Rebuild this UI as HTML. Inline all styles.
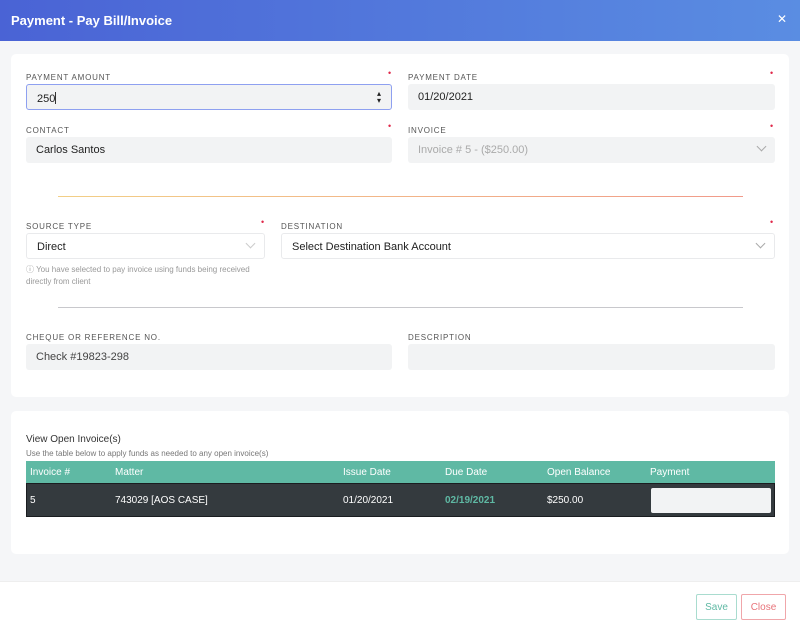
<!DOCTYPE html>
<html><head><style>
*{box-sizing:border-box;margin:0;padding:0}
body{width:800px;height:630px;background:#f5f6f8;font-family:"Liberation Sans",sans-serif;position:relative;overflow:hidden;color:#333}
.hd{position:absolute;left:0;top:0;width:800px;height:41px;background:linear-gradient(90deg,#4a63d5,#5a8de2);color:#fff;font-weight:bold;font-size:13px;padding:13px 11px}
.x{position:absolute;right:13px;top:12px;color:#fff;font-size:12px;font-weight:normal}
.card{position:absolute;left:11px;width:778px;background:#fff;border-radius:5px}
.lb{position:absolute;font-size:8px;letter-spacing:.8px;color:#555}
.req{position:absolute;color:#e0284a;font-size:9px}
.in{position:absolute;height:26px;background:#f2f3f4;border-radius:3px;font-size:11px;padding:7px 10px;color:#222}
.sel{background:#fff;border:1px solid #e9eaec}
.chev{position:absolute;right:10px;top:6px;width:7px;height:7px;border-right:1px solid #aaa;border-bottom:1px solid #aaa;transform:rotate(45deg)}
.ln{position:absolute;left:58px;width:685px;height:1px}
.ft{position:absolute;left:0;top:581px;width:800px;height:49px;background:#fff;border-top:1px solid #eee}
.btn{position:absolute;top:594px;height:26px;border:1px solid;border-radius:2px;font-size:10px;text-align:center;line-height:26px;background:#fff}
</style></head><body>
<div class="hd">Payment - Pay Bill/Invoice<span class="x">✕</span></div>
<div class="card" style="top:54px;height:343px"></div>
<div class="card" style="top:411px;height:143px"></div>

<div class="lb" style="left:26px;top:73px">PAYMENT AMOUNT</div><span class="req" style="left:388px;top:68px">•</span>
<div class="in" style="left:26px;top:84px;width:366px;border:1px solid #8ea0f0">250<span style="display:inline-block;width:1px;height:12px;background:#333;vertical-align:-2px"></span><span style="position:absolute;right:10px;top:5px;font-size:8px;line-height:7px">▴<br>▾</span></div>
<div class="lb" style="left:408px;top:73px">PAYMENT DATE</div><span class="req" style="left:770px;top:68px">•</span>
<div class="in" style="left:408px;top:84px;width:367px">01/20/2021</div>

<div class="lb" style="left:26px;top:126px">CONTACT</div><span class="req" style="left:388px;top:121px">•</span>
<div class="in" style="left:26px;top:137px;width:366px">Carlos Santos</div>
<div class="lb" style="left:408px;top:126px">INVOICE</div><span class="req" style="left:770px;top:121px">•</span>
<div class="in" style="left:408px;top:137px;width:367px;color:#aaa">Invoice # 5 - ($250.00)<span class="chev"></span></div>

<div class="ln" style="top:196px;background:linear-gradient(90deg,#f2cf86,#f19a8a)"></div>

<div class="lb" style="left:26px;top:222px">SOURCE TYPE</div><span class="req" style="left:261px;top:217px">•</span>
<div class="in sel" style="left:26px;top:233px;width:239px">Direct<span class="chev" style="border-color:#ccc"></span></div>
<div style="position:absolute;left:26px;top:264px;font-size:8px;color:#999;line-height:12px;width:240px">ⓘ You have selected to pay invoice using funds being received directly from client</div>
<div class="lb" style="left:281px;top:222px">DESTINATION</div><span class="req" style="left:770px;top:217px">•</span>
<div class="in sel" style="left:281px;top:233px;width:494px">Select Destination Bank Account<span class="chev"></span></div>

<div class="ln" style="top:307px;background:#c8c8cc"></div>

<div class="lb" style="left:26px;top:333px">CHEQUE OR REFERENCE NO.</div>
<div class="in" style="left:26px;top:344px;width:366px;color:#444">Check #19823-298</div>
<div class="lb" style="left:408px;top:333px">DESCRIPTION</div>
<div class="in" style="left:408px;top:344px;width:367px"></div>

<div style="position:absolute;left:26px;top:434px;font-size:10px;color:#333">View Open Invoice(s)</div>
<div style="position:absolute;left:26px;top:449px;font-size:8px;color:#777">Use the table below to apply funds as needed to any open invoice(s)</div>
<div style="position:absolute;left:26px;top:461px;width:749px;height:22px;background:#5fb9a4;color:#fff;font-size:10px">
<span style="position:absolute;left:4px;top:6px">Invoice #</span><span style="position:absolute;left:89px;top:6px">Matter</span><span style="position:absolute;left:317px;top:6px">Issue Date</span><span style="position:absolute;left:419px;top:6px">Due Date</span><span style="position:absolute;left:521px;top:6px">Open Balance</span><span style="position:absolute;left:624px;top:6px">Payment</span></div>
<div style="position:absolute;left:26px;top:483px;width:749px;height:34px;background:#343a3e;border:1px solid #1a1d20;color:#fff;font-size:10px">
<span style="position:absolute;left:3px;top:11px">5</span><span style="position:absolute;left:88px;top:11px">743029 [AOS CASE]</span><span style="position:absolute;left:316px;top:11px">01/20/2021</span><span style="position:absolute;left:418px;top:11px;color:#5fb9a4;font-weight:bold">02/19/2021</span><span style="position:absolute;left:520px;top:11px">$250.00</span><span style="position:absolute;left:624px;top:4px;width:120px;height:25px;background:#f2f3f4;border-radius:2px"></span></div>

<div class="ft"></div>
<div class="btn" style="left:696px;width:41px;color:#5fb9a4;border-color:#a9dccf">Save</div>
<div class="btn" style="left:741px;width:45px;color:#e8737a;border-color:#f0a6aa">Close</div>
</body></html>
